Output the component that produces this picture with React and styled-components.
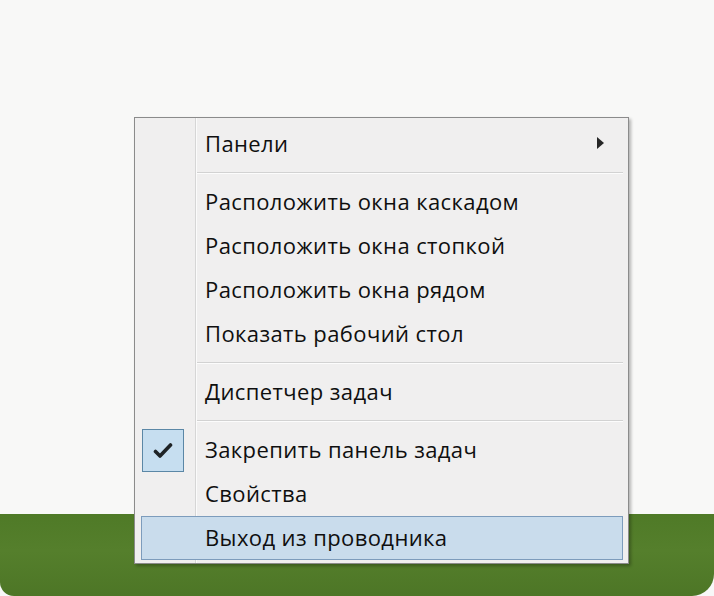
import React from "react";
import styled, { createGlobalStyle } from "styled-components";

const GlobalStyle = createGlobalStyle`
  html, body {
    margin: 0;
    padding: 0;
  }
  body {
    width: 714px;
    height: 596px;
    overflow: hidden;
    font-family: "Open Sans", "Noto Sans", "DejaVu Sans", sans-serif;
  }
`;

const Desktop = styled.div`
  width: 714px;
  height: 596px;
  display: grid;
  grid-template-rows: 514px 82px;
  background: #f8f8f8;
  position: relative;
`;

const Wall = styled.div`
  background: #f8f8f7;
`;

const Grass = styled.div`
  background: linear-gradient(180deg, #4f7a27 0%, #557f2c 45%, #4d7626 100%);
  border-radius: 0 0 22px 14px;
`;

const Menu = styled.ul`
  position: absolute;
  left: 134px;
  top: 117px;
  width: 482px;
  margin: 0;
  padding: 4px 5px 3px 6px;
  list-style: none;
  background: #f0efef;
  border: 1px solid #8b8b8b;
  box-shadow: 2px 2px 3px rgba(0, 0, 0, 0.28);
  background-image: linear-gradient(
    90deg,
    transparent 60px,
    #d6d6d6 60px,
    #d6d6d6 61px,
    #fbfbfb 61px,
    #fbfbfb 62px,
    transparent 62px
  );
`;

const Item = styled.li`
  height: 44px;
  display: flex;
  align-items: center;
  box-sizing: border-box;
  border: 1px solid ${(p) => (p.$active ? "#7d9cbc" : "transparent")};
  background: ${(p) => (p.$active ? "#c9dcec" : "transparent")};
`;

const Gutter = styled.span`
  width: 58px;
  flex: none;
  display: flex;
  align-items: center;
  justify-content: center;
`;

const CheckBox = styled.span`
  width: 42px;
  height: 43px;
  box-sizing: border-box;
  margin-left: -16px;
  border: 1px solid #5b87a6;
  background: #c6def0;
  display: flex;
  align-items: center;
  justify-content: center;
`;

const Label = styled.span`
  flex: 1;
  padding-left: 5px;
  padding-bottom: 3px;
  font-size: 22px;
  color: #0f0f0f;
  letter-spacing: 0.4px;
  white-space: nowrap;
`;

const Arrow = styled.span`
  width: 0;
  height: 0;
  margin-right: 18px;
  margin-bottom: 2px;
  border-top: 6px solid transparent;
  border-bottom: 6px solid transparent;
  border-left: 7px solid #262626;
`;

const Separator = styled.li`
  height: 14px;
  display: flex;
  align-items: center;
  padding-left: 56px;
  &::after {
    content: "";
    flex: 1;
    height: 1px;
    background: #d2d2d2;
    border-bottom: 1px solid #fcfcfc;
  }
`;

const CheckIcon = () => (
  <svg width="20" height="17" viewBox="0 0 20 17">
    <path
      d="M2.5 9.5 L7 14 L17.5 3"
      fill="none"
      stroke="#1f2326"
      strokeWidth="3.6"
      strokeLinecap="round"
      strokeLinejoin="round"
    />
  </svg>
);

const groups = [
  [{ text: "Панели", submenu: true }],
  [
    { text: "Расположить окна каскадом" },
    { text: "Расположить окна стопкой" },
    { text: "Расположить окна рядом" },
    { text: "Показать рабочий стол" },
  ],
  [{ text: "Диспетчер задач" }],
  [
    { text: "Закрепить панель задач", checked: true },
    { text: "Свойства" },
    { text: "Выход из проводника", active: true },
  ],
];

export default function App() {
  return (
    <>
      <GlobalStyle />
      <Desktop>
        <Wall />
        <Grass />
        <Menu>
          {groups.map((group, gi) => (
            <React.Fragment key={gi}>
              {gi > 0 && <Separator />}
              {group.map((item) => (
                <Item key={item.text} $active={item.active}>
                  <Gutter>
                    {item.checked && (
                      <CheckBox>
                        <CheckIcon />
                      </CheckBox>
                    )}
                  </Gutter>
                  <Label>{item.text}</Label>
                  {item.submenu && <Arrow />}
                </Item>
              ))}
            </React.Fragment>
          ))}
        </Menu>
      </Desktop>
    </>
  );
}
